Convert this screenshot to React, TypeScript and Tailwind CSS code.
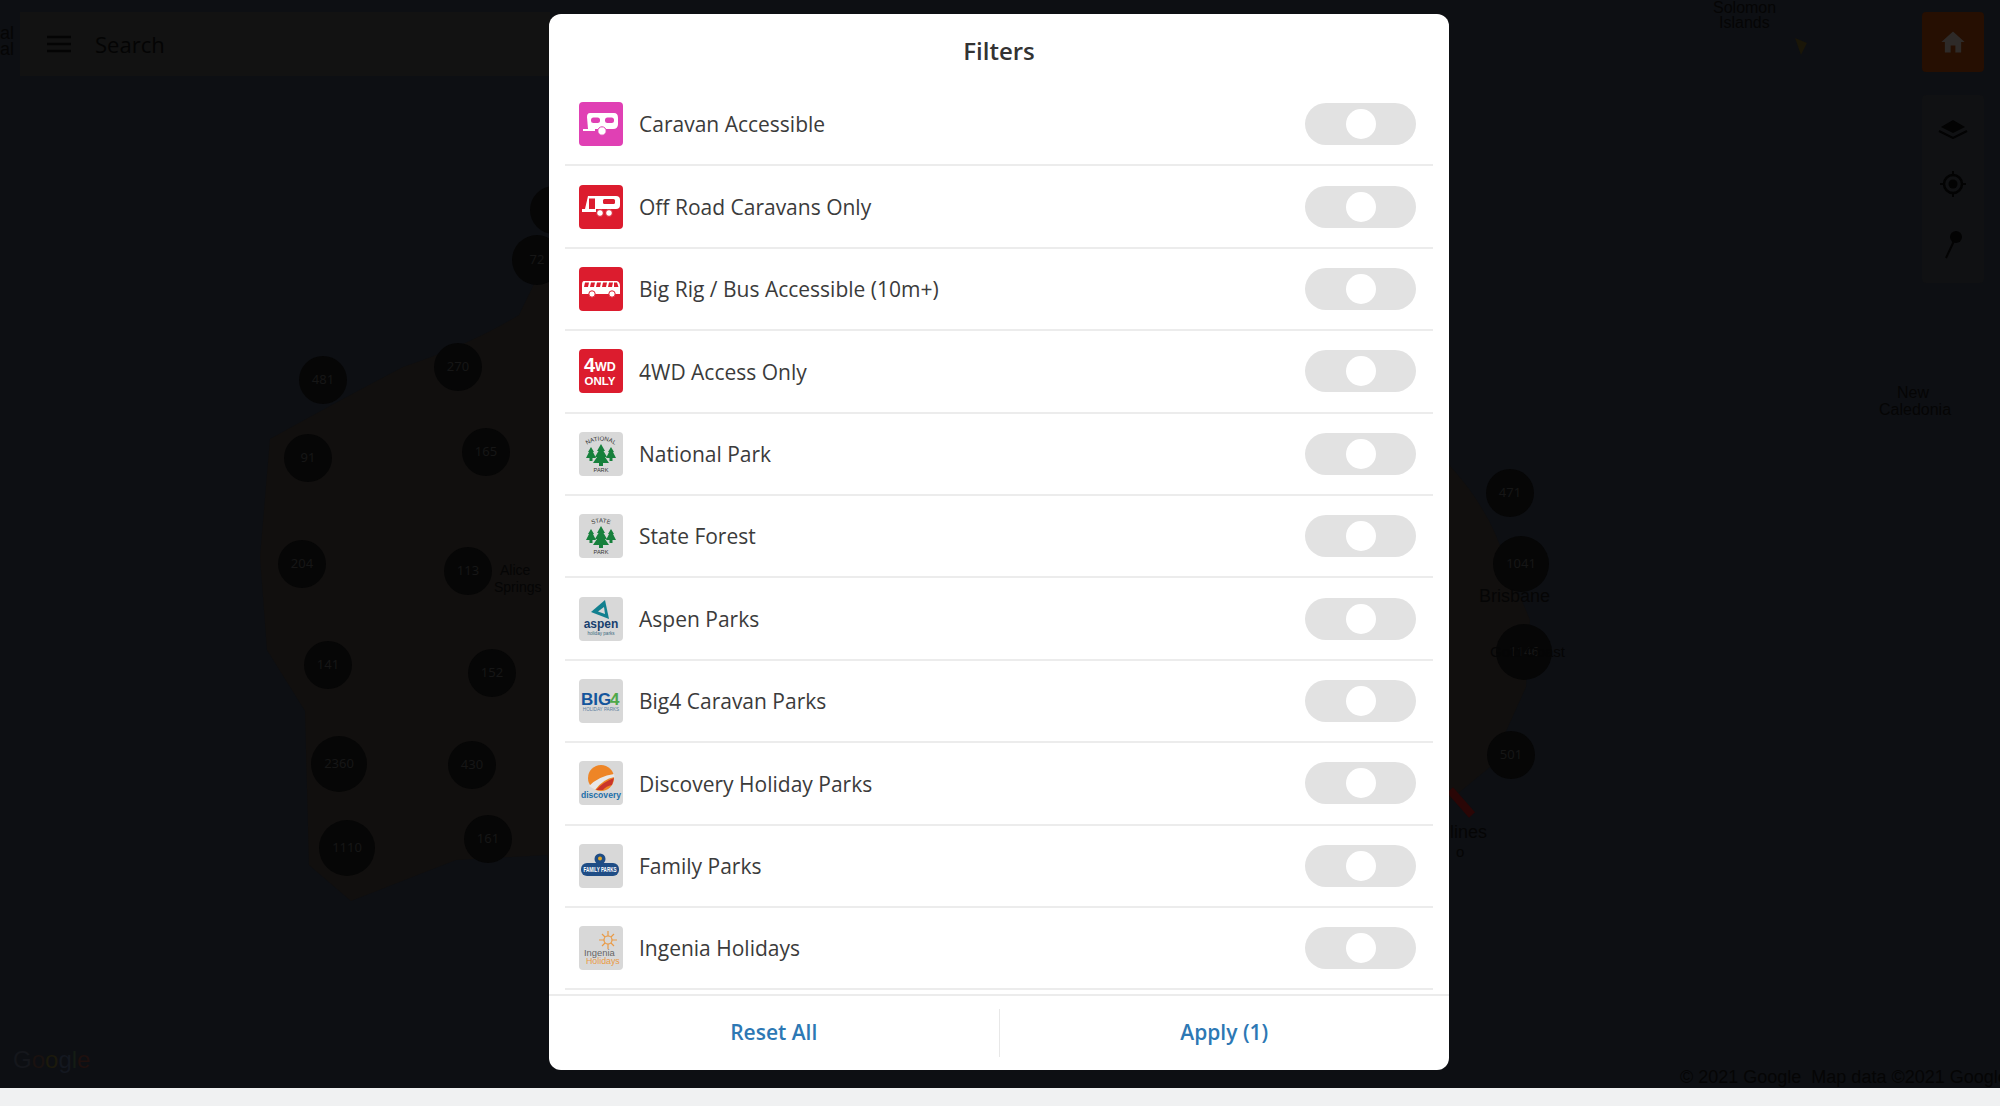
import { ReactNode } from "react";

const sans = "font-['Open_Sans','Noto_Sans',sans-serif]";

function Tile({ bg, children }: { bg: string; children: ReactNode }) {
  return (
    <svg viewBox="0 0 44 44" className="w-11 h-11 shrink-0">
      <rect width="44" height="44" rx="4" fill={bg} />
      {children}
    </svg>
  );
}

function Trees({ top, bottom, id }: { top: string; bottom: string; id: string }) {
  return (
    <>
      <path id={id} d="M5 15 Q22 2 39 15" fill="none" />
      <text fontFamily="Liberation Sans" fontSize="6" fill="#333">
        <textPath href={`#${id}`} startOffset="50%" textAnchor="middle">{top}</textPath>
      </text>
      <path d="M22 12 L26 19 H24.5 L28 25 H26 L30 31 H24 V34 H20 V31 H14 L18 25 H16 L19.5 19 H18 Z" fill="#17803c" />
      <path d="M12 15 L15 20 H14 L17 26 H13.5 V29 H10.5 V26 H7 L10 20 H9 Z" fill="#17803c" />
      <path d="M32 15 L35 20 H34 L37 26 H33.5 V29 H30.5 V26 H27 L30 20 H29 Z" fill="#17803c" />
      <text x="22" y="40" textAnchor="middle" fontFamily="Liberation Sans" fontSize="5.6" fill="#333">{bottom}</text>
    </>
  );
}

const icons: Record<string, ReactNode> = {
  caravan: (
    <Tile bg="#e040b4">
      <path d="M11 11 H35 Q39 11 39 16 V22 Q39 27 34 27 H9 L8 15 Q8 11 11 11 Z" fill="#fff" />
      <rect x="4" y="27" width="12" height="2" fill="#fff" />
      <circle cx="23" cy="29" r="4.2" fill="#fff" stroke="#e040b4" strokeWidth="1" />
      <rect x="12" y="15.5" width="9" height="5.5" rx="2.5" fill="#e040b4" />
      <rect x="26" y="15.5" width="9" height="5.5" rx="2.5" fill="#e040b4" />
    </Tile>
  ),
  offroad: (
    <Tile bg="#dc1c2e">
      <path d="M9 11 H37 Q41 11 41 15 V20 Q41 24 37 24 H6 Z" fill="#fff" />
      <rect x="3" y="24" width="14" height="3" fill="#fff" />
      <rect x="10" y="13.5" width="6" height="10.5" fill="#dc1c2e" />
      <rect x="24" y="14" width="12" height="5" rx="1.5" fill="#dc1c2e" />
      <circle cx="21" cy="28" r="3.4" fill="#fff" stroke="#dc1c2e" />
      <circle cx="30" cy="28" r="3.4" fill="#fff" stroke="#dc1c2e" />
    </Tile>
  ),
  bus: (
    <Tile bg="#dc1c2e">
      <path d="M5 14 H38 Q41 15 41 19 V27 H3 V18 Q3 14 5 14 Z" fill="#fff" />
      <path d="M6 15.5h4l-1 4.5H5zM12 15.5h4l-1 4.5h-4zM18 15.5h4l-1 4.5h-4zM24 15.5h4l-1 4.5h-4zM30 15.5h4l-1 4.5h-4zM35 15.5h3l1.5 4.5H35z" fill="#dc1c2e" />
      <circle cx="13" cy="27" r="3.2" fill="#fff" stroke="#dc1c2e" />
      <circle cx="33" cy="27" r="3.2" fill="#fff" stroke="#dc1c2e" />
    </Tile>
  ),
  fourwd: (
    <Tile bg="#dc1c2e">
      <text x="5" y="23" fontFamily="Liberation Sans" fontWeight="700" fontSize="20" fill="#fff">4</text>
      <text x="16" y="22" fontFamily="Liberation Sans" fontWeight="700" fontSize="12.5" fill="#fff">WD</text>
      <text x="21" y="36" textAnchor="middle" fontFamily="Liberation Sans" fontWeight="700" fontSize="11.5" fill="#fff">ONLY</text>
    </Tile>
  ),
  national: <Tile bg="#d8d8d8"><Trees id="np" top="NATIONAL" bottom="PARK" /></Tile>,
  state: <Tile bg="#d8d8d8"><Trees id="sf" top="STATE" bottom="PARK" /></Tile>,
  aspen: (
    <Tile bg="#d8d8d8">
      <path d="M26 3 L30 22 L12 15 Z" fill="#12808f" />
      <path d="M25 10 L26 17 L19 14.5 Z" fill="#d8d8d8" />
      <text x="22" y="31" textAnchor="middle" fontFamily="Liberation Sans" fontWeight="700" fontSize="12" fill="#173f6e">aspen</text>
      <text x="22" y="38" textAnchor="middle" fontFamily="Liberation Sans" fontSize="4.6" fill="#3d6a80">holiday parks</text>
    </Tile>
  ),
  big4: (
    <Tile bg="#d8d8d8">
      <text x="2" y="26" fontFamily="Liberation Sans" fontWeight="700" fontSize="17" fill="#14559c">BIG</text>
      <text x="31" y="26" fontFamily="Liberation Sans" fontWeight="700" fontSize="17" fill="#4fa84a">4</text>
      <text x="22" y="32" textAnchor="middle" fontFamily="Liberation Sans" fontSize="4.6" fill="#5d7f9e">HOLIDAY PARKS</text>
    </Tile>
  ),
  discovery: (
    <Tile bg="#d8d8d8">
      <circle cx="22" cy="17" r="13" fill="#ee8526" />
      <path d="M10 25 Q20 15 35 13 L35.5 16 Q24 18 16 29 Z" fill="#e8e8e8" />
      <path d="M17 29 Q24 21 35 17 L33 24 Q27 25 24 29 Z" fill="#c9352b" />
      <text x="22" y="37" textAnchor="middle" fontFamily="Liberation Sans" fontWeight="700" fontSize="8.6" fill="#1d6fa8">discovery</text>
    </Tile>
  ),
  family: (
    <Tile bg="#d8d8d8">
      <circle cx="21" cy="15" r="5.5" fill="#1f4d86" />
      <circle cx="21" cy="14.5" r="2" fill="#e2a92c" />
      <rect x="2" y="19" width="38" height="13" rx="6" fill="#1f4d86" />
      <text x="21" y="28" textAnchor="middle" fontFamily="Liberation Sans" fontWeight="700" fontSize="7" fill="#fff" textLength="33" lengthAdjust="spacingAndGlyphs">FAMILY PARKS</text>
    </Tile>
  ),
  ingenia: (
    <Tile bg="#d8d8d8">
      <g stroke="#ea9a45" strokeWidth="1.2">
        <path d="M29 5 V23 M20 14 H38 M23 8 L35 20 M35 8 L23 20" />
      </g>
      <circle cx="29" cy="14" r="4" fill="#d8d8d8" stroke="#ea9a45" strokeWidth="1.2" />
      <text x="5" y="30" fontFamily="Liberation Sans" fontSize="9.4" fill="#666">Ingenia</text>
      <text x="7" y="38" fontFamily="Liberation Sans" fontSize="8.8" fill="#ea9a45">Holidays</text>
    </Tile>
  ),
};

const filters = [
  { label: "Caravan Accessible", icon: "caravan" },
  { label: "Off Road Caravans Only", icon: "offroad" },
  { label: "Big Rig / Bus Accessible (10m+)", icon: "bus" },
  { label: "4WD Access Only", icon: "fourwd" },
  { label: "National Park", icon: "national" },
  { label: "State Forest", icon: "state" },
  { label: "Aspen Parks", icon: "aspen" },
  { label: "Big4 Caravan Parks", icon: "big4" },
  { label: "Discovery Holiday Parks", icon: "discovery" },
  { label: "Family Parks", icon: "family" },
  { label: "Ingenia Holidays", icon: "ingenia" },
];

const pins = [
  { x: 323, y: 380, r: 24, t: "481" },
  { x: 458, y: 367, r: 24, t: "270" },
  { x: 308, y: 458, r: 24, t: "91" },
  { x: 486, y: 452, r: 24, t: "165" },
  { x: 302, y: 564, r: 24, t: "204" },
  { x: 468, y: 571, r: 24, t: "113" },
  { x: 328, y: 665, r: 24, t: "141" },
  { x: 492, y: 673, r: 24, t: "152" },
  { x: 339, y: 764, r: 28, t: "2360" },
  { x: 472, y: 765, r: 24, t: "430" },
  { x: 347, y: 848, r: 28, t: "1110" },
  { x: 488, y: 839, r: 24, t: "161" },
  { x: 554, y: 210, r: 24, t: "" },
  { x: 537, y: 260, r: 25, t: "72" },
  { x: 1510, y: 493, r: 24, t: "471" },
  { x: 1521, y: 564, r: 28, t: "1041" },
  { x: 1524, y: 652, r: 28, t: "1146" },
  { x: 1511, y: 755, r: 24, t: "501" },
];

function Pin({ x, y, r, t }: { x: number; y: number; r: number; t: string }) {
  return (
    <div
      className="absolute rounded-full bg-[#060606] flex items-center justify-center text-[13px] text-[#161616]"
      style={{ left: x - r, top: y - r, width: r * 2, height: r * 2 }}
    >
      {t}
    </div>
  );
}

function MapLabel({ x, y, children, size = 18 }: { x: number; y: number; children: ReactNode; size?: number }) {
  return (
    <span
      className="absolute font-['Liberation_Sans',sans-serif] text-[#050505] whitespace-pre leading-none"
      style={{ left: x, top: y, fontSize: size }}
    >
      {children}
    </span>
  );
}

function MapBehind() {
  return (
    <div className="relative h-[1088px] bg-[#0d0f13] overflow-hidden">
      {/* landmass */}
      <svg viewBox="0 0 2000 1088" className="absolute inset-0 w-full h-full">
        <path
          d="M270 439 Q340 400 403 367 Q470 345 519 315 L560 230 L700 200 L1300 260 L1451 467 Q1490 510 1505 560 L1530 620 L1526 687 L1490 767 L1450 800 L1380 960 L560 960 L547 855 L456 860 L351 901 L309 865 L305 711 L267 650 L260 557 Z"
          fill="#110f0e"
        />
        <path d="M1450 790 L1472 815" stroke="#2a0606" strokeWidth="8" />
        <path d="M1795 38 l12 5 l-6 12 z" fill="#1a1608" />
      </svg>

      {pins.map((p) => (
        <Pin key={`${p.x}-${p.y}`} {...p} />
      ))}

      {/* faint place names */}
      <MapLabel x={1713} y={0} size={16}>Solomon</MapLabel>
      <MapLabel x={1719} y={15} size={16}>Islands</MapLabel>
      <MapLabel x={1897} y={385} size={16}>New</MapLabel>
      <MapLabel x={1879} y={402} size={16}>Caledonia</MapLabel>
      <MapLabel x={1479} y={587}>Brisbane</MapLabel>
      <MapLabel x={1490} y={644} size={15}>Gold Coast</MapLabel>
      <MapLabel x={1450} y={823}>lines</MapLabel>
      <MapLabel x={1456} y={844} size={15}>o</MapLabel>
      <MapLabel x={500} y={563} size={14}>Alice</MapLabel>
      <MapLabel x={494} y={580} size={14}>Springs</MapLabel>
      <MapLabel x={0} y={24} size={18}>al</MapLabel>
      <MapLabel x={0} y={40} size={18}>al</MapLabel>

      {/* search bar */}
      <div className={`absolute left-5 top-3 w-[530px] h-16 bg-[#121212] flex items-center pl-[26px] gap-[23px] ${sans}`}>
        <svg viewBox="0 0 26 18" className="w-[26px] h-[18px]">
          <path d="M1 2 H25 M1 9 H25 M1 16 H25" stroke="#040404" strokeWidth="2.4" />
        </svg>
        <span className="text-[22px] text-[#040404]">Search</span>
      </div>

      {/* right controls */}
      <div className="absolute left-[1922px] top-3 w-[62px] flex flex-col gap-[23px]">
        <div className="h-[60px] bg-[#260f02] rounded-sm flex items-center justify-center">
          <svg viewBox="0 0 24 24" className="w-7 h-7">
            <path d="M12 3 L2 12 H5 V21 H10 V15 H14 V21 H19 V12 H22 Z" fill="#2e2a28" />
          </svg>
        </div>
        <div className="h-[188px] bg-[#101113] rounded-sm flex flex-col items-center justify-around py-2">
          <svg viewBox="0 0 30 20" className="w-[30px] h-5">
            <path d="M15 1 L27 8 L15 14 L3 8 Z" fill="#030303" />
            <path d="M1 12 L15 19 L29 12" fill="none" stroke="#030303" strokeWidth="2" />
          </svg>
          <svg viewBox="0 0 26 26" className="w-[26px] h-[26px]">
            <circle cx="13" cy="13" r="9" fill="none" stroke="#030303" strokeWidth="2.5" />
            <circle cx="13" cy="13" r="4.5" fill="#030303" />
            <path d="M13 0 V4 M13 22 V26 M0 13 H4 M22 13 H26" stroke="#030303" strokeWidth="2" />
          </svg>
          <svg viewBox="0 0 20 30" className="w-5 h-[30px]">
            <circle cx="13" cy="8" r="6" fill="#030303" />
            <path d="M11 12 L3 29" stroke="#030303" strokeWidth="2" />
          </svg>
        </div>
      </div>

      {/* google */}
      <span className="absolute left-[13px] top-[1048px] font-['Liberation_Sans',sans-serif] text-[24px] leading-none">
        <span className="text-[#15171c]">G</span>
        <span className="text-[#1a1210]">o</span>
        <span className="text-[#1c1a0c]">o</span>
        <span className="text-[#141820]">g</span>
        <span className="text-[#141c14]">l</span>
        <span className="text-[#1f100e]">e</span>
      </span>
      <MapLabel x={1680} y={1068}>© 2021 Google  Map data ©2021 Google</MapLabel>
    </div>
  );
}

function Toggle() {
  return (
    <div className="w-[111px] h-[42px] rounded-[21px] bg-[#e2e2e2] flex items-center justify-center">
      <div className="w-[30px] h-[30px] rounded-full bg-white" />
    </div>
  );
}

function FilterModal() {
  return (
    <div className={`absolute left-[549px] top-[14px] w-[900px] h-[1056px] bg-white rounded-xl flex flex-col overflow-hidden ${sans}`}>
      <h2 className="h-[70px] shrink-0 flex items-center justify-center pt-1 text-[24px] font-semibold text-[#333]">
        Filters
      </h2>
      <div className="flex-1 min-h-0 overflow-hidden px-4">
        {filters.map((f) => (
          <div key={f.label} className="h-[82.4px] flex items-center pl-[14px] pr-[17px] border-b-2 border-[#ececec]">
            {icons[f.icon]}
            <span className="ml-4 flex-1 pt-[2px] text-[21px] text-[#3b3b3b]">{f.label}</span>
            <Toggle />
          </div>
        ))}
      </div>
      <div className="h-[76px] shrink-0 border-t-2 border-[#ececec] flex items-center">
        <button className="flex-1 text-center text-[21px] font-semibold text-[#2d78b4]">Reset All</button>
        <div className="w-px h-12 bg-[#e8e8e8]" />
        <button className="flex-1 text-center text-[21px] font-semibold text-[#2d78b4]">Apply (1)</button>
      </div>
    </div>
  );
}

export default function App() {
  return (
    <div className="relative h-[1106px] flex flex-col bg-[#f0f1f2] overflow-hidden">
      <MapBehind />
      <FilterModal />
    </div>
  );
}
